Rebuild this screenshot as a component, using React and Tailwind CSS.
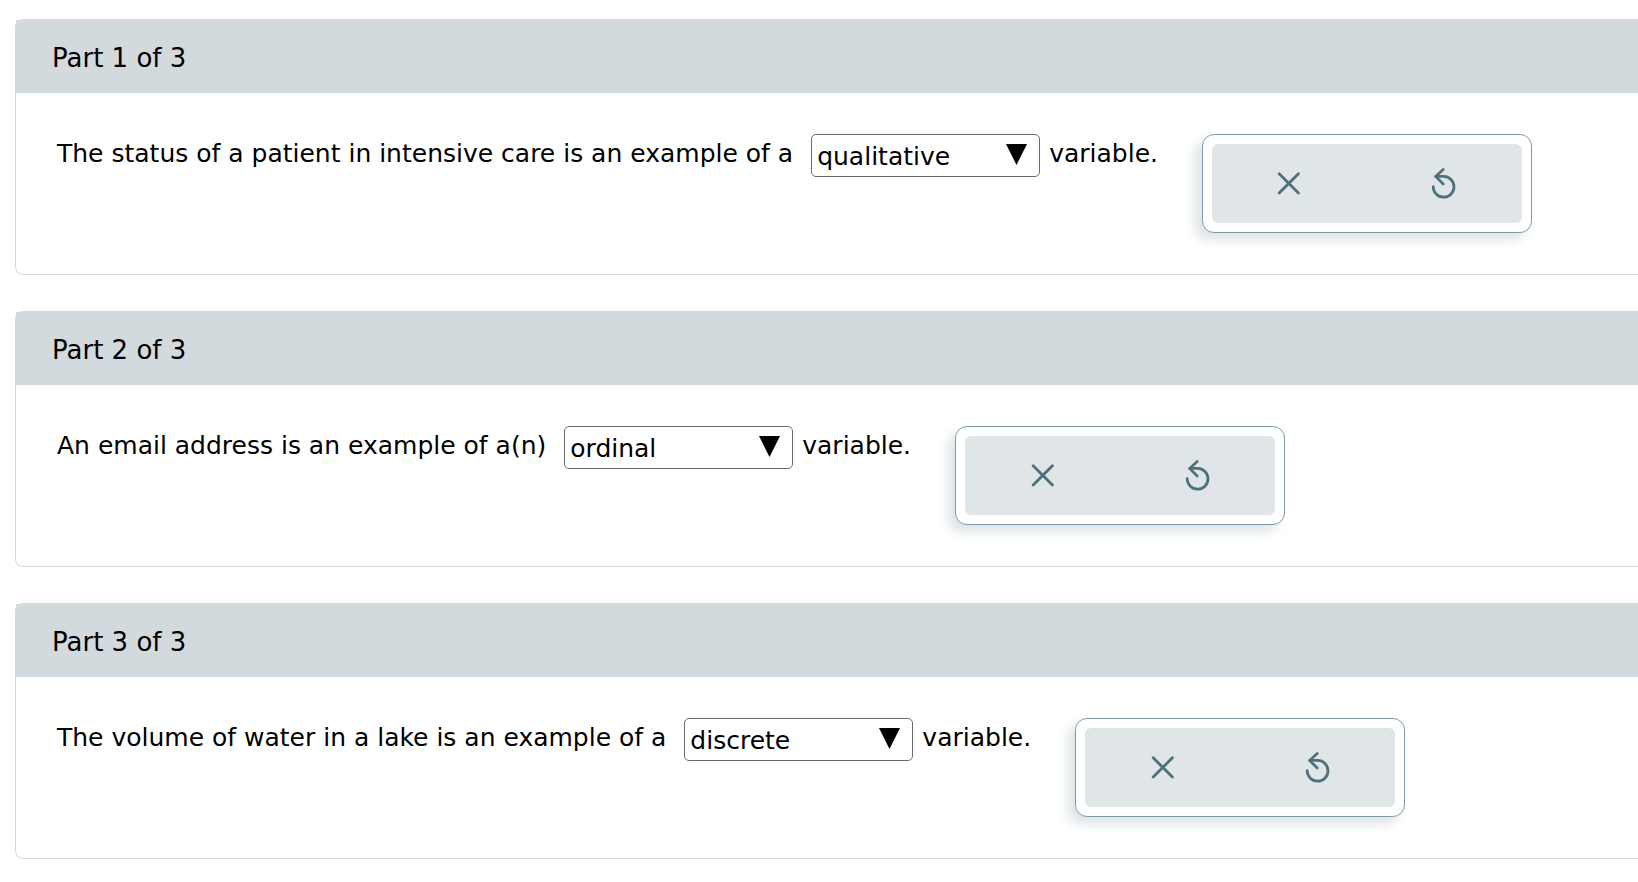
import React, { useState } from "react";

const OPTIONS = ["qualitative", "quantitative", "discrete", "continuous", "nominal", "ordinal"];

const PARTS = [
  { lead: "The status of a patient in intensive care is an example of a", value: "qualitative" },
  { lead: "An email address is an example of a(n)", value: "ordinal" },
  { lead: "The volume of water in a lake is an example of a", value: "discrete" },
];

function ClearIcon() {
  return (
    <svg width="24" height="24" viewBox="0 0 24 24" fill="none" stroke="currentColor" strokeWidth="2.8" strokeLinecap="round" aria-hidden="true">
      <path d="M2.2 1.8 L21.4 21 M21.4 1.8 L2.2 21" />
    </svg>
  );
}

function ResetIcon() {
  return (
    <svg width="26" height="32" viewBox="0 0 26 32" fill="none" stroke="currentColor" strokeWidth="2.7" strokeLinecap="round" strokeLinejoin="round" aria-hidden="true">
      <path d="M2.2 18.6 A10.4 10.4 0 1 0 12.6 8.4 H4.8" />
      <path d="M12.2 1.5 L4.6 8.4 L12.2 16" />
    </svg>
  );
}

function Part({ index, total, lead, value }) {
  const [answer, setAnswer] = useState(value);
  const id = `answer-${index}`;
  return (
    <section className="rounded-l-lg border border-r-0 border-[#d3dadd]">
      <h2 className="bg-[#d3dadd] px-9 pt-5 pb-4 text-[26px] leading-[37px]">
        Part {index} of {total}
      </h2>
      <div className="flex items-start px-[41px] py-[41px]">
        <label htmlFor={id} className="leading-[40px] whitespace-nowrap">{lead}</label>
        <div className="relative mr-[9px] ml-[18px] w-[229px] shrink-0">
          <select
            id={id}
            value={answer}
            onChange={(e) => setAnswer(e.target.value)}
            className="block h-[43px] w-full appearance-none rounded-[5px] border border-[#6b6b6b] bg-white pt-[2px] pr-10 pl-[5px] text-black"
          >
            <option value=""></option>
            {OPTIONS.map((o) => (
              <option key={o} value={o}>{o}</option>
            ))}
          </select>
          <svg className="pointer-events-none absolute top-[10px] right-[13px]" width="21" height="21" viewBox="0 0 21 21" aria-hidden="true">
            <path d="M0 0 H21 L10.5 21 Z" fill="#000" />
          </svg>
        </div>
        <span className="leading-[40px] whitespace-nowrap">variable.</span>
        <div className="ml-11 w-[330px] shrink-0 rounded-xl border border-[#7f9aa5] bg-white p-[9px] shadow-[-7px_7px_12px_0px_#dde4e7]">
          <div className="grid h-[79px] grid-cols-2 rounded-md bg-[#e0e5e7] text-[#4d707d]">
            <button type="button" aria-label="Clear answer" onClick={() => setAnswer("")} className="flex items-center justify-center">
              <ClearIcon />
            </button>
            <button type="button" aria-label="Reset answer" onClick={() => setAnswer(value)} className="flex items-center justify-center">
              <ResetIcon />
            </button>
          </div>
        </div>
      </div>
    </section>
  );
}

export default function App() {
  return (
    <main className="flex flex-col gap-9 overflow-x-hidden bg-white pt-[19px] pb-6 pl-[15px] font-['DejaVu_Sans',Verdana,sans-serif] text-[25px] text-black">
      {PARTS.map((p, i) => (
        <Part key={p.lead} index={i + 1} total={PARTS.length} {...p} />
      ))}
    </main>
  );
}
